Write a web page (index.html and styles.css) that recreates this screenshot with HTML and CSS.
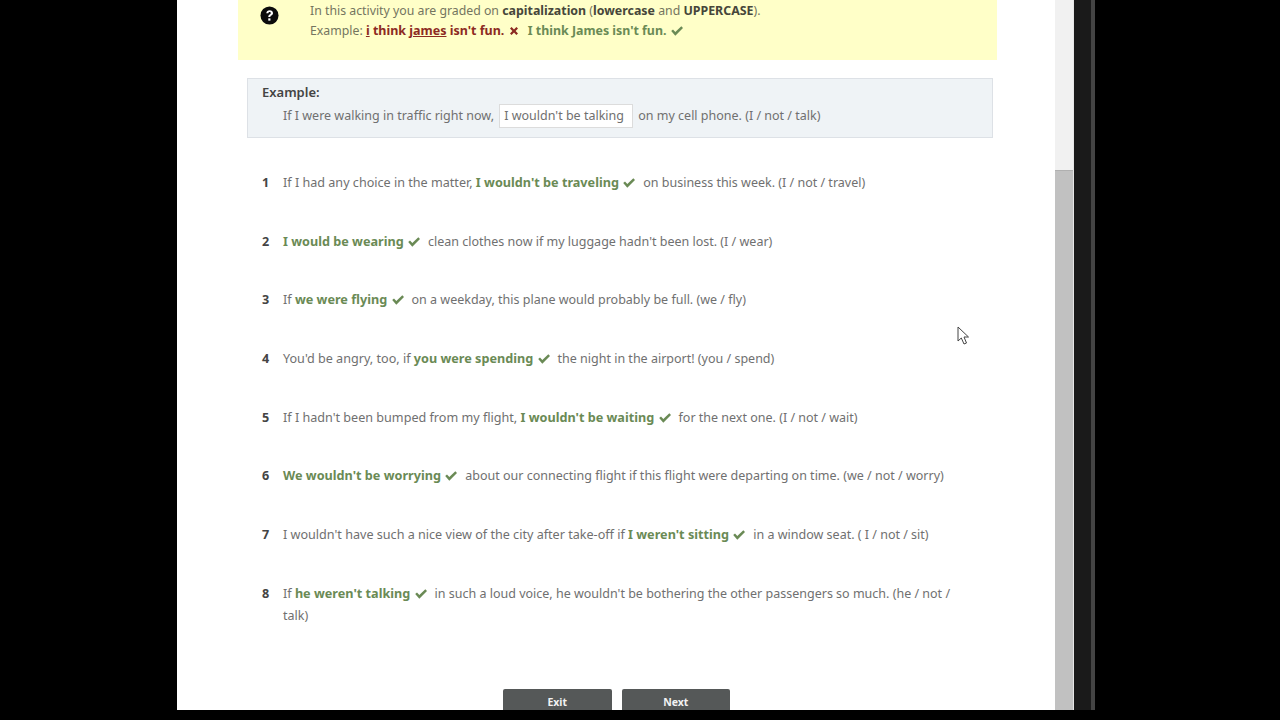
FILE: index.html
```html
<!DOCTYPE html>
<html lang="en">
<head>
<meta charset="utf-8">
<title>Activity</title>
<link rel="stylesheet" href="styles.css">
</head>
<body>
<svg class="defs" width="0" height="0" aria-hidden="true">
  <symbol id="check" viewBox="0 0 12 10"><path d="M0.200 5.100 L2 3.500 L4.300 5.900 L10.300 0.200 L12 1.900 L4.300 9.800 Z"/></symbol>
  <symbol id="cross" viewBox="0 0 10 10"><path d="M1 2.600 L2.600 1 L5 3.400 L7.400 1 L9 2.600 L6.600 5 L9 7.400 L7.400 9 L5 6.600 L2.600 9 L1 7.400 L3.400 5 Z"/></symbol>
</svg>
<div class="screen">
  <div class="stage">
    <div class="margin"></div>
    <main class="panel">
      <section class="notice">
        <div class="notice-icon">
          <svg viewBox="0 0 20 20" width="19" height="19"><circle cx="10" cy="10" r="9.500" fill="#0c0c0c"/><path d="M6.600 7.600c.2-2 1.600-3.200 3.600-3.200 2 0 3.500 1.200 3.500 2.900 0 1.400-.8 2.100-1.800 2.800-.8.5-1 .8-1 1.600H8.700c0-1.400.4-2 1.400-2.700.8-.5 1.200-.9 1.200-1.500 0-.7-.5-1.100-1.200-1.100-.8 0-1.200.5-1.300 1.300z" fill="#fff"/><rect x="8.700" y="13" width="2.300" height="2.400" fill="#fff"/></svg>
        </div>
        <div class="notice-text">
          <p>In this activity you are graded on <b>capitalization</b> (<b>lowercase</b> and <b>UPPERCASE</b>).</p>
          <p>Example: <span class="wrong"><u>i</u> think <u>james</u> isn't fun.</span> <svg class="mark mark-x"><use href="#cross"/></svg> <span class="right">I think James isn't fun.</span> <svg class="mark mark-c"><use href="#check"/></svg></p>
        </div>
      </section>

      <section class="example">
        <div class="example-title">Example:</div>
        <div class="example-line">If I were walking in traffic right now, <span class="field">I wouldn't be talking</span> on my cell phone. (I / not / talk)</div>
      </section>

      <ol class="items">
        <li class="item"><span class="num">1</span><div>If I had any choice in the matter, <span class="right">I wouldn't be traveling</span> <svg class="mark mark-c"><use href="#check"/></svg><span class="after">on business this week. (I / not / travel)</span></div></li>
        <li class="item"><span class="num">2</span><div><span class="right">I would be wearing</span> <svg class="mark mark-c"><use href="#check"/></svg><span class="after">clean clothes now if my luggage hadn't been lost. (I / wear)</span></div></li>
        <li class="item"><span class="num">3</span><div>If <span class="right">we were flying</span> <svg class="mark mark-c"><use href="#check"/></svg><span class="after">on a weekday, this plane would probably be full. (we / fly)</span></div></li>
        <li class="item"><span class="num">4</span><div>You'd be angry, too, if <span class="right">you were spending</span> <svg class="mark mark-c"><use href="#check"/></svg><span class="after">the night in the airport! (you / spend)</span></div></li>
        <li class="item"><span class="num">5</span><div>If I hadn't been bumped from my flight, <span class="right">I wouldn't be waiting</span> <svg class="mark mark-c"><use href="#check"/></svg><span class="after">for the next one. (I / not / wait)</span></div></li>
        <li class="item"><span class="num">6</span><div><span class="right">We wouldn't be worrying</span> <svg class="mark mark-c"><use href="#check"/></svg><span class="after">about our connecting flight if this flight were departing on time. (we / not / worry)</span></div></li>
        <li class="item"><span class="num">7</span><div>I wouldn't have such a nice view of the city after take-off if <span class="right">I weren't sitting</span> <svg class="mark mark-c"><use href="#check"/></svg><span class="after">in a window seat. ( I / not / sit)</span></div></li>
        <li class="item"><span class="num">8</span><div>If <span class="right">he weren't talking</span> <svg class="mark mark-c"><use href="#check"/></svg><span class="after">in such a loud voice, he wouldn't be bothering the other passengers so much. (he / not / talk)</span></div></li>
      </ol>

      <div class="actions">
        <button class="btn" type="button">Exit</button>
        <button class="btn" type="button">Next</button>
      </div>

      <svg class="cursor" viewBox="0 0 14 20" width="14" height="20"><path d="M1 1 V15 L4.300 12 L7 18 L9.500 17 L7 11 H11.500 Z" fill="#fff" stroke="#444" stroke-width="1"/></svg>
    </main>
    <div class="scrollbar"><div class="thumb"></div></div>
    <div class="strip"></div>
  </div>
</div>
</body>
</html>
```
FILE: styles.css
```css
* { box-sizing: border-box; }
html, body { margin: 0; height: 100%; background: #000; overflow: hidden; }
.defs { position: absolute; }
.screen { width: 1280px; height: 720px; background: #000; }
.stage { display: flex; height: 710px; overflow: hidden; }
.margin { width: 177px; flex: none; background: #000; }
.panel {
  position: relative;
  width: 878px;
  flex: none;
  background: #fff;
  padding-left: 61px;
  font: 12.600px/22px "Noto Sans", "Open Sans", sans-serif;
  color: #707070;
  overflow: hidden;
}
p { margin: 0; }
b { color: #46463a; font-weight: 700; font-size: 12.400px; line-height: 1; }
.notice {
  display: flex;
  width: 759px;
  height: 60px;
  background: #ffffc8;
  color: #74755f;
  font-size: 12.300px;
}
.notice-icon { width: 72px; flex: none; padding: 6px 0 0 22px; }
.notice-icon svg { display: block; }
.notice-text { line-height: 20px; padding-top: 1px; }
.wrong { color: #8c2a22; font-weight: 700; font-size: 12.500px; line-height: 1; }
.right { color: #6a8a55; font-weight: 700; font-size: 12.670px; line-height: 1; }
.notice .right { font-size: 12.400px; }
.mark { display: inline-block; vertical-align: -1px; }
.mark-c { width: 12px; height: 10px; fill: #6a8a55; margin-left: 1px; }
.mark-x { width: 10px; height: 10px; fill: #8c2a22; margin: 0 6px 0 1px; }
.example {
  width: 746px;
  height: 60px;
  margin: 18px 0 0 9px;
  padding: 2px 14px 0;
  background: #eff3f6;
  border: 1px solid #dde1e6;
}
.example-title { color: #444; font-weight: 600; font-size: 13px; }
.example-line { padding-left: 21px; margin-top: 1px; line-height: 24px; font-size: 12.500px; }
.field {
  display: inline-block;
  height: 24px;
  padding: 0 8px 0 4px;
  margin: 0 2px;
  background: #fff;
  border: 1px solid #dcdcdc;
  line-height: 22px;
}
.items { list-style: none; margin: 34px 0 0 24px; padding: 0; width: 693px; }
.item { display: flex; min-height: 22px; margin-bottom: 36.700px; }
.num { width: 21px; flex: none; color: #444; font-weight: 700; }
.after { margin-left: 8px; font-size: 12.500px; line-height: 1; }
.actions { display: flex; gap: 10px; margin: 0 0 0 265px; padding-top: 25px; }
.btn {
  width: 108.500px;
  height: 40px;
  padding: 0 0 14px;
  border: none;
  border-radius: 2px 2px 0 0;
  background: #555858;
  color: #f2f2f2;
  font: 700 10.500px "Noto Sans", sans-serif;
}
.cursor { position: absolute; left: 780px; top: 326px; }
.scrollbar { width: 18px; flex: none; background: #f1f1f1; padding-top: 170px; }
.thumb { height: 540px; background: #c1c1c1; border-top: 1px solid #b0b0b0; }
.strip {
  width: 22px;
  flex: none;
  background: #1a1a1a;
  border-left: 1px solid #e6e6e6;
  border-right: 4px solid #444;
}
```
